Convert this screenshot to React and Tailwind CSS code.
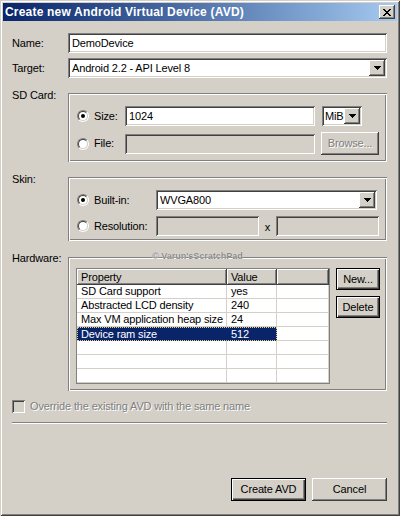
import React from 'react'

const sunken = 'shadow-[inset_1px_1px_0_#808080,inset_-1px_-1px_0_#ffffff,inset_2px_2px_0_#404040,inset_-2px_-2px_0_#d4d0c8]'
const raised = 'shadow-[inset_-1px_-1px_0_#404040,inset_1px_1px_0_#ffffff,inset_-2px_-2px_0_#808080,inset_2px_2px_0_#d4d0c8]'
const etched = 'shadow-[inset_1px_1px_0_#808080,inset_-1px_-1px_0_#ffffff,inset_2px_2px_0_#ffffff,inset_-2px_-2px_0_#808080]'
const disabledText = 'text-[#808080] [text-shadow:1px_1px_0_#ffffff]'

function Arrow() {
  return (
    <svg width="7" height="4" viewBox="0 0 7 4" shapeRendering="crispEdges">
      <path d="M0 0h7v1h-1v1h-1v1h-1v1h-1v-1h-1v-1h-1v-1h-1z" fill="#000" />
    </svg>
  )
}

function Radio({ checked }) {
  return (
    <span className="flex w-[12px] h-[12px] shrink-0 rounded-full border border-t-[#808080] border-l-[#808080] border-b-white border-r-white">
      <span className="flex flex-1 items-center justify-center rounded-full border border-t-[#404040] border-l-[#404040] border-b-[#d4d0c8] border-r-[#d4d0c8] bg-white">
        {checked && <span className="w-[4px] h-[4px] rounded-full bg-black" />}
      </span>
    </span>
  )
}

function Field({ value, disabled, className = '' }) {
  return (
    <div className={`h-[20px] flex items-center px-[4px] ${sunken} ${disabled ? 'bg-[#d4d0c8]' : 'bg-white'} ${className}`}>
      <span className="whitespace-nowrap">{value}</span>
    </div>
  )
}

function Combo({ value, className = '', pad = 'pl-[2px]' }) {
  return (
    <div className={`h-[20px] flex items-center p-[2px] bg-white ${sunken} ${className}`}>
      <span className={`flex-1 whitespace-nowrap ${pad}`}>{value}</span>
      <span className={`w-[16px] h-[16px] flex items-center justify-center bg-[#d4d0c8] ${raised}`}>
        <Arrow />
      </span>
    </div>
  )
}

function Button({ children, isDefault, disabled, className = '' }) {
  if (isDefault) {
    return (
      <div className={`flex border border-black bg-[#d4d0c8] ${className}`}>
        <div className="flex flex-1 items-center justify-center shadow-[inset_1px_1px_0_#ffffff,inset_-1px_-1px_0_#404040,inset_-2px_-2px_0_#808080]">
          {children}
        </div>
      </div>
    )
  }
  return (
    <div className={`flex items-center justify-center bg-[#d4d0c8] ${raised} ${disabled ? disabledText : ''} ${className}`}>
      {children}
    </div>
  )
}

const rows = [
  ['SD Card support', 'yes'],
  ['Abstracted LCD density', '240'],
  ['Max VM application heap size', '24'],
  ['Device ram size', '512', true],
  ['', ''],
  ['', ''],
  ['', ''],
]

function HardwareTable() {
  return (
    <div className="w-[254px] h-[116px] border border-[#808080] bg-white flex flex-col">
      <div className="flex h-[16px]">
        <div className={`w-[150px] h-full flex items-center pl-[4px] bg-[#d4d0c8] ${raised}`}>Property</div>
        <div className={`w-[50px] h-full flex items-center pl-[4px] bg-[#d4d0c8] ${raised}`}>Value</div>
        <div className={`flex-1 h-full bg-[#d4d0c8] ${raised}`} />
      </div>
      {rows.map(([p, v, sel], i) => (
        <div key={i} className="flex h-[14px]">
          {sel ? (
            <div className="flex w-[200px] bg-[#0a246a] text-white outline-1 outline-dotted outline-[#e8d27a] -outline-offset-1">
              <div className="w-[150px] pl-[4px] leading-[14px] whitespace-nowrap">{p}</div>
              <div className="w-[50px] pl-[4px] leading-[14px]">{v}</div>
            </div>
          ) : (
            <>
              <div className="w-[150px] pl-[4px] leading-[13px] border-b border-r border-[#d4d0c8] whitespace-nowrap">{p}</div>
              <div className="w-[50px] pl-[4px] leading-[13px] border-b border-r border-[#d4d0c8]">{v}</div>
            </>
          )}
          <div className="flex-1 border-b border-r border-[#d4d0c8]" />
        </div>
      ))}
    </div>
  )
}

export default function App() {
  return (
    <div className="w-[400px] h-[516px] p-[3px] flex flex-col bg-[#d4d0c8] text-black text-[11px] leading-[13px] tracking-[-0.15px] font-['Liberation_Sans',Arial,sans-serif] shadow-[inset_1px_1px_0_#d4d0c8,inset_-1px_-1px_0_#404040,inset_2px_2px_0_#ffffff,inset_-2px_-2px_0_#808080]">
      {/* title bar */}
      <div className="h-[18px] flex items-center pl-[2px] pr-[2px] bg-linear-to-r from-[#0a246a] to-[#a6caf0]">
        <span className="flex-1 text-white text-[12px] tracking-[0.2px] font-bold whitespace-nowrap">Create new Android Virtual Device (AVD)</span>
        <span className={`w-[16px] h-[14px] flex items-center justify-center bg-[#d4d0c8] ${raised}`}>
          <svg width="8" height="7" viewBox="0 0 8 7" shapeRendering="crispEdges">
            <path d="M0 0h2v1h1v1h2v-1h1v-1h2v1h-1v1h-1v1h-1v1h1v1h1v1h1v1h-2v-1h-1v-1h-2v1h-1v1h-2v-1h1v-1h1v-1h1v-1h-1v-1h-1v-1h-1z" fill="#000" />
          </svg>
        </span>
      </div>

      <div className="flex-1 flex flex-col pl-[9px] pr-[10px] pb-[12px]">
        <div className="mt-[12px] flex items-center">
          <span className="w-[56px]">Name:</span>
          <Field value="DemoDevice" className="flex-1" />
        </div>

        <div className="mt-[5px] flex items-center">
          <span className="w-[56px]">Target:</span>
          <Combo value="Android 2.2 - API Level 8" className="flex-1" />
        </div>

        {/* SD card */}
        <div className="mt-[9px] flex items-start">
          <span className="w-[56px] pt-[2px]">SD Card:</span>
          <div className={`flex-1 mt-[6px] pt-[13px] pl-[9px] pb-[7px] ${etched}`}>
            <div className="h-[20px] flex items-center">
              <Radio checked />
              <span className="ml-[5px] w-[31px]">Size:</span>
              <Field value="1024" className="w-[190px]" />
              <Combo value="MiB" className="ml-[7px] w-[40px]" pad="pl-[1px]" />
            </div>
            <div className="mt-[6px] h-[23px] flex items-center">
              <Radio />
              <span className="ml-[5px] w-[31px]">File:</span>
              <Field value="" disabled className="w-[190px]" />
              <Button disabled className="ml-[6px] w-[58px] h-[23px]">Browse...</Button>
            </div>
          </div>
        </div>

        {/* Skin */}
        <div className="mt-[9px] flex items-start">
          <span className="w-[56px] pt-[2px]">Skin:</span>
          <div className={`flex-1 mt-[6px] pt-[13px] pl-[9px] pb-[5px] ${etched}`}>
            <div className="h-[20px] flex items-center">
              <Radio checked />
              <span className="ml-[5px] w-[62px]">Built-in:</span>
              <Combo value="WVGA800" className="w-[221px]" />
            </div>
            <div className="mt-[6px] h-[20px] flex items-center">
              <Radio />
              <span className="ml-[5px] w-[62px]">Resolution:</span>
              <Field value="" disabled className="w-[103px]" />
              <span className="w-[17px] pt-[3px] text-center">x</span>
              <Field value="" disabled className="w-[103px]" />
            </div>
          </div>
        </div>

        {/* Hardware */}
        <div className="mt-[10px] flex items-start">
          <span className="w-[56px] pt-[1px]">Hardware:</span>
          <div className={`relative flex-1 mt-[6px] pt-[11px] pl-[8px] pb-[7px] flex items-start ${etched}`}>
            <span className="absolute left-[84px] -top-[6px] text-[9px] leading-[11px] tracking-normal font-bold text-[#8a8a8a] [text-shadow:0_0_1px_#ffffff] whitespace-nowrap">© Varun'sScratchPad</span>
            <HardwareTable />
            <div className="ml-[6px] flex flex-col gap-[6px]">
              <Button isDefault className="w-[44px] h-[22px]">New...</Button>
              <Button isDefault className="w-[44px] h-[22px]">Delete</Button>
            </div>
          </div>
        </div>

        <div className="mt-[9px] h-[13px] flex items-center">
          <span className={`w-[13px] h-[13px] bg-[#d4d0c8] ${sunken}`} />
          <span className={`ml-[5px] ${disabledText}`}>Override the existing AVD with the same name</span>
        </div>

        <div className="mt-[9px] h-[2px] border-t border-b border-t-[#808080] border-b-white" />

        <div className="flex-1" />

        <div className="flex justify-end gap-[6px]">
          <Button isDefault className="w-[75px] h-[23px]">Create AVD</Button>
          <Button className="w-[75px] h-[23px]">Cancel</Button>
        </div>
      </div>
    </div>
  )
}
